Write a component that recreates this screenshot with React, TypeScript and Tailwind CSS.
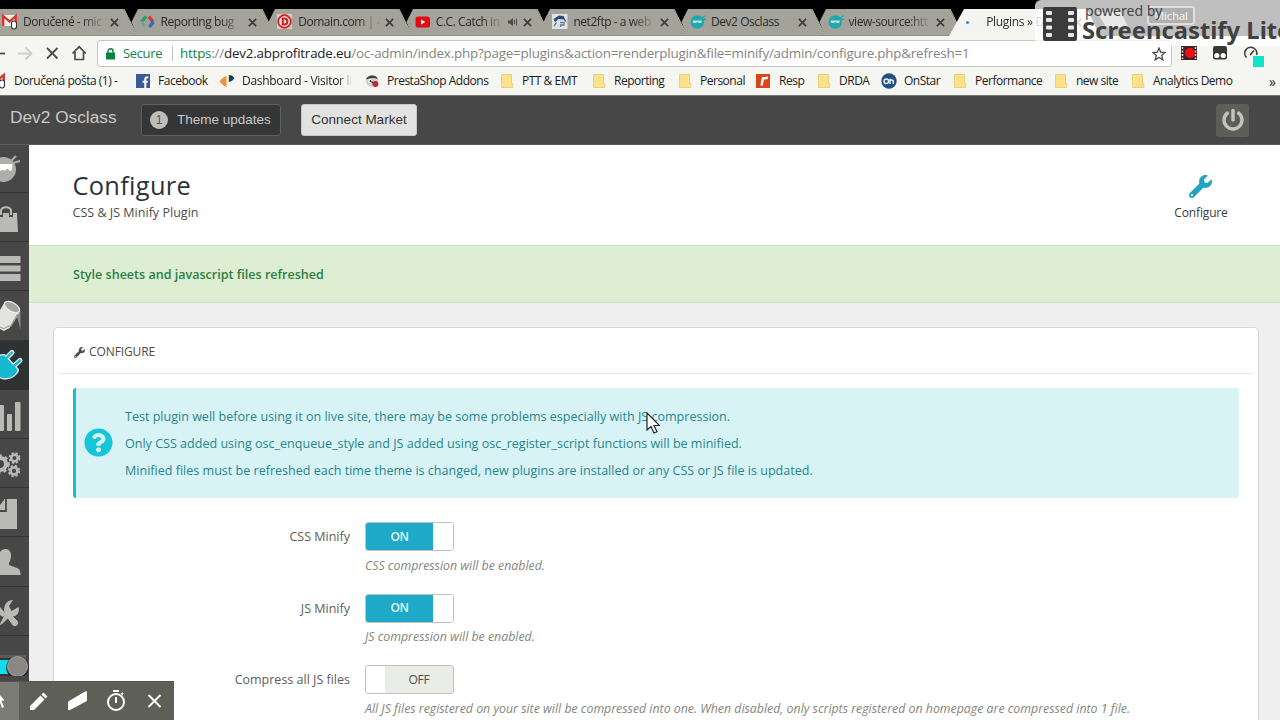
import React from "react";
import { FaWrench, FaQuestionCircle, FaPowerOff } from "react-icons/fa";

interface Tab {
  icon: string;
  title: string;
  sound?: boolean;
}
interface Bookmark {
  icon: string;
  label: string;
  width: number;
  gap: number;
}
interface Option {
  label: string;
  on: boolean;
  help: string;
}

const tabs: Tab[] = [
  { icon: "gmail", title: "Doručené - mic" },
  { icon: "code", title: "Reporting bug" },
  { icon: "domain", title: "Domain.com | 4" },
  { icon: "youtube", title: "C.C. Catch in", sound: true },
  { icon: "ftp", title: "net2ftp - a web" },
  { icon: "osclass", title: "Dev2 Osclass" },
  { icon: "osclass", title: "view-source:htt" },
];

const bookmarks: Bookmark[] = [
  { icon: "gmail", label: "Doručená pošta (1) -", width: 146, gap: 24 },
  { icon: "facebook", label: "Facebook", width: 83, gap: 22 },
  { icon: "leaf", label: "Dashboard - Visitor li", width: 146, gap: 23 },
  { icon: "presta", label: "PrestaShop Addons", width: 136, gap: 22 },
  { icon: "folder", label: "PTT & EMT", width: 92, gap: 21 },
  { icon: "folder", label: "Reporting", width: 86, gap: 21 },
  { icon: "folder", label: "Personal", width: 77, gap: 21 },
  { icon: "resp", label: "Resp", width: 62, gap: 23 },
  { icon: "folder", label: "DRDA", width: 63, gap: 21 },
  { icon: "onstar", label: "OnStar", width: 73, gap: 23 },
  { icon: "folder", label: "Performance", width: 101, gap: 21 },
  { icon: "folder", label: "new site", width: 77, gap: 21 },
  { icon: "folder", label: "Analytics Demo", width: 130, gap: 21 },
];

const options: Option[] = [
  { label: "CSS Minify", on: true, help: "CSS compression will be enabled." },
  { label: "JS Minify", on: true, help: "JS compression will be enabled." },
  {
    label: "Compress all JS files",
    on: false,
    help: "All JS files registered on your site will be compressed into one. When disabled, only scripts registered on homepage are compressed into 1 file.",
  },
];

const SiteIcon = ({ name }: { name: string }) => {
  const cls = "block h-4 w-4 shrink-0 overflow-visible";
  switch (name) {
    case "gmail":
      return (
        <svg viewBox="0 0 16 16" className={cls}>
          <rect x="0" y="1" width="15" height="11" fill="#f1efec" />
          <path d="M1.2 12V2L7.5 7.5 13.8 2v10" fill="none" stroke="#d9322b" strokeWidth="2.3" />
          <rect x="9.5" y="7" width="5" height="8" rx="2.4" fill="#fff" stroke="#333" strokeWidth="1.1" />
        </svg>
      );
    case "code":
      return (
        <svg viewBox="0 0 16 16" className={cls} fill="none" strokeWidth="3.4">
          <path d="M6 2.5L1.5 8" stroke="#1ba56b" />
          <path d="M1.3 7.5L5 13" stroke="#8a9a92" strokeWidth="2.6" />
          <path d="M9 2.5l4 5.5" stroke="#d43c36" />
          <path d="M13.5 7.8L9.5 13" stroke="#3668c4" />
        </svg>
      );
    case "domain":
      return (
        <svg viewBox="0 0 16 16" className={cls}>
          <rect width="15" height="15" fill="#dcc9c4" />
          <circle cx="7.5" cy="7.5" r="6.3" fill="#f0e4e0" stroke="#d81e22" strokeWidth="1.8" />
          <path d="M5.8 4.5h1.6a3 3 0 0 1 0 6H5.8z" fill="none" stroke="#d81e22" strokeWidth="2" />
        </svg>
      );
    case "youtube":
      return (
        <svg viewBox="0 0 16 16" className={cls}>
          <rect x="0.5" y="2.5" width="14.5" height="11" rx="2.6" fill="#e30b12" />
          <path d="M6 5.5v5l4.3-2.5z" fill="#fff" />
        </svg>
      );
    case "ftp":
      return (
        <svg viewBox="0 0 16 16" className={cls}>
          <rect width="15.5" height="15" fill="#dfe3e6" />
          <path d="M1.500 5L7 1.500l4.500.5 3.500 7-3.500-3.500-5-.5-3.500 3z" fill="#284f73" />
          <path d="M2 12l2.500-3.500M8 8.500h4v2.500H8.500V13" stroke="#5d7b96" strokeWidth="1.300" fill="none" />
        </svg>
      );
    case "osclass":
      return (
        <svg viewBox="0 0 16 16" className={cls}>
          <circle cx="7.3" cy="8" r="6.8" fill="#1fa8ad" />
          <path d="M12 4l3.5-2.5M13 5.5l3-.5" stroke="#1fa8ad" strokeWidth="1.5" />
          <path d="M2.5 6.5h9.5l-.8 2.6H8.5L7.3 8 6 9.1H3.3z" fill="#bfe0de" />
        </svg>
      );
    case "facebook":
      return (
        <svg viewBox="0 0 16 16" className={cls}>
          <rect y="1" width="14" height="14" fill="#3b5a98" />
          <path d="M9.3 15V6.2c0-1.500.7-2 3-1.800M6.500 8.700h5.200" fill="none" stroke="#fff" strokeWidth="2" />
        </svg>
      );
    case "leaf":
      return (
        <svg viewBox="0 0 16 16" className={cls}>
          <path d="M7.500 3v11C5 13 2 10.500.5 8.500 2 6 5 3.800 7.500 3z" fill="#f0913e" />
          <path d="M9.800 2c3 0 5 1.500 5.500 3.500-1.500 2-3 3-5.500 3.500z" fill="#1d4149" />
        </svg>
      );
    case "presta":
      return (
        <svg viewBox="0 0 16 16" className={cls}>
          <circle cx="7" cy="8" r="6" fill="#cfcfcb" />
          <path d="M1 6.500C2 2 11 .5 13 6 9 4.500 5 5 1 6.500z" fill="#44423f" />
          <circle cx="5" cy="8" r="1.900" fill="#fff" />
          <circle cx="5.400" cy="8" r=".9" fill="#222" />
          <path d="M6.500 8.500l4 4" stroke="#333" strokeWidth="1.500" />
          <circle cx="10.500" cy="11" r="2.900" fill="#c9203c" />
        </svg>
      );
    case "resp":
      return (
        <svg viewBox="0 0 16 16" className={cls}>
          <rect y="1" width="14" height="14" fill="#dc4316" />
          <path d="M5.500 12.500L7 5.300h1.800l3-.5" fill="none" stroke="#fff" strokeWidth="2.400" />
        </svg>
      );
    case "onstar":
      return (
        <svg viewBox="0 0 16 16" className={cls}>
          <circle cx="8" cy="8" r="7.700" fill="#23517f" />
          <circle cx="5.300" cy="8.300" r="2.300" fill="none" stroke="#e8eef5" strokeWidth="1.500" />
          <path d="M9 11V5.800M9 8c1-1.500 3.300-1.300 3.300.5V11" fill="none" stroke="#e8eef5" strokeWidth="1.500" />
        </svg>
      );
    default:
      return (
        <svg viewBox="0 0 16 16" className={cls}>
          <path d="M.5 1.500h10v9h1.300v4H.5z" fill="#fae28a" stroke="#e9c965" strokeWidth=".8" />
        </svg>
      );
  }
};

const Cross = ({ className }: { className: string }) => (
  <svg viewBox="0 0 10 10" className={className} fill="none" stroke="currentColor">
    <path d="M1 1l8 8M9 1L1 9" />
  </svg>
);

const TabStrip = () => (
  <div className="flex h-9 bg-black pt-[9px] text-[12px] tracking-[-0.45px] text-[#2b2b28]">
    {tabs.map((tab, i) => (
      <div key={i} className="relative flex h-[27px] w-[137.6px] shrink-0 items-center pb-px pl-[2px]">
        <svg viewBox="0 0 137 27" className="absolute left-0 top-0 h-[27px] w-[137px] overflow-visible">
          <path d="M0 0H123.500L137 27H-1L-6.500 13z" fill="#a3a39a" />
          <path d="M124 0L137 26.500" stroke="#c4c4bb" strokeWidth="1" />
          <path d="M-1 26.500H137" stroke="#8f8f88" strokeWidth="1" />
        </svg>
        <div className="relative flex items-center">
          <SiteIcon name={tab.icon} />
          <span
            className={
              (tab.sound ? "w-[66px] " : "w-[83px] ") +
              (tab.title === "Dev2 Osclass" ? "" : "mask-r-from-72% ") +
              "ml-[5px] whitespace-nowrap"
            }
          >
            {tab.title}
          </span>
          {tab.sound && (
            <svg viewBox="0 0 10 10" className="ml-[6px] mr-[1px] h-[10px] w-[10px]" fill="#4a4a46">
              <path d="M0 3.500h2L5 1v8L2 6.500H0z" />
              <path d="M6.500 3v4M8.500 1.500v7" stroke="#4a4a46" strokeWidth="1" />
            </svg>
          )}
          <Cross className="ml-[4px] h-[9px] w-[9px] stroke-[1.8] text-[#3c3c39]" />
        </div>
      </div>
    ))}
    <div className="relative flex h-[27px] w-[164px] shrink-0 items-center pb-px">
      <svg viewBox="0 0 164 27" className="absolute left-0 top-0 h-[27px] w-[164px] overflow-visible">
        <path d="M1 0H124L137 27H-14z" fill="#f4f4f1" />
        <path d="M134 3h24l7 15h-22z" fill="#a3a39a" />
      </svg>
      <span className="relative ml-[3px] h-[3px] w-[3px] rounded-full bg-[#3b87d8]" />
      <span className="relative ml-[17px] w-[80px] whitespace-nowrap tracking-[-0.3px] mask-r-from-55%">Plugins » Dev2</span>
      <Cross className="relative ml-[7px] h-[9px] w-[9px] stroke-[1.8] text-[#666]" />
    </div>
  </div>
);

const Toolbar = () => (
  <div className="flex h-[34px] items-center bg-[#f5f5f2] text-[#4b4b48]">
    <svg viewBox="0 0 97 34" className="h-[34px] w-[97px] shrink-0" fill="none" stroke="#4b4b48" strokeWidth="1.800">
      <path d="M0 17.500h5" />
      <path d="M18 17.500h13M25.500 11.500l6 6-6 6" stroke="#cfcfcc" />
      <path d="M47 12l10.500 10.500M57.500 12L47 22.500" />
      <path d="M72.500 17.500l6.700-6.700 6.700 6.700M75 16v7.500h8.500V16" strokeWidth="1.700" />
    </svg>
    <div className="mt-px flex h-[27px] w-[1075px] shrink-0 items-center rounded-[3px] border border-[#c6c6c2] bg-white pl-2 pr-[5px]">
      <svg viewBox="0 0 9 12" className="h-3 w-[9px]">
        <rect x="0" y="4.500" width="9" height="7" rx=".6" fill="#0b8043" />
        <path d="M2 5V3.200a2.500 2.500 0 0 1 5 0V5" fill="none" stroke="#0b8043" strokeWidth="1.400" />
      </svg>
      <span className="ml-2 w-[40px] whitespace-nowrap text-[13px] tracking-[-0.35px] text-[#15814b]">Secure</span>
      <span className="ml-[9px] mr-[7px] h-[15px] w-px bg-[#c0c0bd]" />
      <span className="whitespace-nowrap text-[13.4px] tracking-[-0.21px] text-[#858582]">
        <span className="text-[#15814b]">https</span>://<span className="text-[#222]">dev2.abprofitrade.eu</span>
        /oc-admin/index.php?page=plugins&amp;action=renderplugin&amp;file=minify/admin/configure.php&amp;refresh=1
      </span>
      <svg viewBox="0 0 14 14" className="ml-auto h-[14px] w-[14px]" fill="none" stroke="#4b4b48" strokeWidth="1.300">
        <path d="M7 1l1.700 4.200 4.400.3-3.400 2.900 1.100 4.400L7 10.400l-3.800 2.400 1.100-4.400L.9 5.500l4.400-.3z" />
      </svg>
    </div>
    <svg viewBox="0 0 16 14" className="ml-[9px] h-[14px] w-4">
      <rect width="16" height="14" fill="#3a2426" />
      <path d="M1.500 1v12M14.500 1v12" stroke="#e8d8d6" strokeWidth="1.500" strokeDasharray="2 1.500" />
      <circle cx="9" cy="7" r="5" fill="#f00d0d" />
    </svg>
    <svg viewBox="0 0 14 14" className="ml-[16px] h-[14px] w-[14px]">
      <rect width="14" height="13.500" rx="2" fill="#383838" />
      <circle cx="3.800" cy="9.500" r="2.600" fill="#fff" />
      <circle cx="10.200" cy="9.500" r="2.600" fill="#fff" />
    </svg>
    <div className="relative ml-[17px] h-[14px] w-[14px]">
      <svg viewBox="0 0 14 14" className="h-[14px] w-[14px]" fill="none" stroke="#3c3c3c" strokeWidth="1.600">
        <path d="M2.500 11.500A6 6 0 1 1 12.500 9M6 9l4-4.500" />
      </svg>
      <span className="absolute left-[9px] top-[10px] h-[11px] w-[11px] bg-[#0ee3cb]" />
    </div>
  </div>
);

const Bookmarks = () => (
  <div className="flex h-[25px] items-center overflow-hidden bg-[#f5f5f2] pb-[3px] text-[12px] tracking-[-0.49px] text-[#1c1c1c]">
    <div className="-ml-[10px] flex items-center">
      {bookmarks.map((b, i) => (
        <div key={i} className="flex shrink-0 items-center" style={{ width: b.width }}>
          <div className="shrink-0" style={{ width: b.gap }}>
            <SiteIcon name={b.icon} />
          </div>
          <span className={"whitespace-nowrap " + (b.icon === "leaf" ? "w-[110px] tracking-[-0.3px] mask-r-from-88%" : "")}>
            {b.label}
          </span>
        </div>
      ))}
    </div>
    <span className="ml-[7px] text-[14px]">»</span>
  </div>
);

const Watermark = () => (
  <div className="absolute left-[1035px] top-0 h-[46px] w-[245px] overflow-hidden rounded-tl-md bg-white/75">
    <div className="absolute left-[112px] top-[6px] h-[19px] w-[48px] rounded-[3px] border-2 border-white/60 bg-[#b0b0ae] text-center text-[11px] leading-[16px] text-white/90">
      Michal
    </div>
    <svg viewBox="0 0 34 34" className="absolute left-[8px] top-[7px] h-[34px] w-[34px]">
      <rect width="34" height="34" rx="2" fill="#3b3b3b" />
      <g fill="#e6e6e4">
        <rect x="3" y="4" width="6" height="4" rx="1" />
        <rect x="3" y="11" width="6" height="4" rx="1" />
        <rect x="3" y="18.500" width="6" height="4" rx="1" />
        <rect x="3" y="26" width="6" height="4" rx="1" />
        <rect x="25" y="4" width="6" height="4" rx="1" />
        <rect x="25" y="11" width="6" height="4" rx="1" />
        <rect x="25" y="18.500" width="6" height="4" rx="1" />
        <rect x="25" y="26" width="6" height="4" rx="1" />
      </g>
    </svg>
    <div className="absolute left-[50px] top-[2px] font-['Noto_Sans'] text-[14.1px] leading-[18px] text-[#464646]">powered by</div>
    <div className="absolute left-[47px] top-[16px] whitespace-nowrap font-['Noto_Sans'] text-[23.8px] font-bold leading-[28px] text-[#414141]">
      Screencastify Lite
    </div>
  </div>
);

const AdminHeader = () => (
  <div className="flex h-[50px] items-center border-b border-t border-b-[#5c5c5c] border-t-[#73736f] bg-[#474747] pl-[10px] font-['Liberation_Sans']">
    <span className="mt-[-4px] w-[131px] whitespace-nowrap text-[17.3px] text-[#c9c9c5]">Dev2 Osclass</span>
    <div className="flex h-8 w-[140px] items-center rounded-[3px] border border-[#5e605e] bg-[#343736] pl-2 text-[13.5px] text-[#c9c9c5]">
      <span className="mr-[9px] flex h-[18px] w-[18px] items-center justify-center rounded-full bg-[#bdbdb9] text-[12px] text-[#555]">1</span>
      Theme updates
    </div>
    <div className="ml-5 flex h-8 w-[116px] items-center justify-center rounded-[3px] border border-[#c6c6c4] bg-[#e2e2e0] text-[13.5px] text-[#333]">
      Connect Market
    </div>
    <div className="ml-auto mr-[31px] flex h-[33px] w-[33px] items-center justify-center rounded-[3px] bg-[#5d5e57] text-[#c4c4be]">
      <FaPowerOff size={22} />
    </div>
  </div>
);

const sideIcons: React.ReactNode[] = [
  <g key="0">
    <circle cx="3.500" cy="24.500" r="12.500" fill="#adadab" />
    <path d="M11 16l5-5M13 18l7-2" stroke="#adadab" strokeWidth="2.200" />
    <path d="M0 19h12.500l-.5 6-2 1-3-2.500-2 2-3-.5-2 1z" fill="#fff" />
  </g>,
  <g key="1">
    <path d="M0 20h17l1 19H0z" />
    <path d="M1 24v-6c0-6 10-6 10 0v6" fill="none" stroke="#474747" strokeWidth="4" />
    <path d="M1 22v-4c0-5 10-5 10 0v4" fill="none" stroke="#b9b9b6" strokeWidth="2" />
  </g>,
  <path key="2" d="M0 14h20.500v7H0zM0 23.500h20.500v6H0zM0 32h20.500v7H0z" />,
  <g key="3">
    <path d="M17 19l3.500 1v19l-2-8-2-6z" fill="#8a8a88" />
    <path d="M0 19L4.500 11.500 19 22 9.500 37 4 40 0 38z" fill="#e3e3df" />
    <path d="M10 35L17 23l2 0-8 13z" fill="#9c9c99" />
    <path d="M0 36l4 1.500 6-3" fill="none" stroke="#a5a5a2" strokeWidth="1.200" />
    <ellipse cx="12" cy="16" rx="8.500" ry="4.300" transform="rotate(30 12 16)" fill="#a3a3a0" stroke="#ececea" strokeWidth="1.300" />
  </g>,
  <g key="4" strokeLinecap="round" strokeLinejoin="round">
    <g stroke="#e9fcfd" fill="#e9fcfd">
      <path d="M7 16.500L12 11.500M14.500 24.500L20 19.500" strokeWidth="5" />
      <path d="M-4 16l8-1 13 14-1 2c-4 6-11 6-14 5l-6-3z" strokeWidth="4" />
    </g>
    <g stroke="#15b8cf" fill="#15b8cf">
      <path d="M7 16.500L12 11.500M14.500 24.500L20 19.500" strokeWidth="2.400" />
      <path d="M-4 16l8-1 13 14-1 2c-4 6-11 6-14 5l-6-3z" strokeWidth="1.400" />
    </g>
  </g>,
  <path key="5" d="M0 15h3q1 0 1 1v24q0 1-1 1H0zM7 25q0-1 1-1h3q1 0 1 1v15q0 1-1 1H8q-1 0-1-1zM15 13q0-1 1-1h3.500q1 0 1 1v27q0 1-1 1H16q-1 0-1-1z" />,
  <g key="6" fill="none" stroke="#b9b9b6">
    <circle cx="0" cy="25" r="6" strokeWidth="4" />
    <circle cx="0" cy="25" r="8.500" strokeWidth="2.500" strokeDasharray="3.200 3.200" />
    <circle cx="14.500" cy="19" r="3.300" strokeWidth="2.500" />
    <circle cx="14.500" cy="19" r="5" strokeWidth="1.800" strokeDasharray="2.200 1.800" />
    <circle cx="14" cy="32" r="3.500" strokeWidth="2.700" />
    <circle cx="14" cy="32" r="5.300" strokeWidth="1.800" strokeDasharray="2.300 1.900" />
  </g>,
  <g key="7">
    <path d="M0 11h17v30H0z" />
    <path d="M0 23h6V11" fill="none" stroke="#474747" strokeWidth="1.800" />
    <path d="M0 17l4-5v-1H0z" fill="#474747" />
  </g>,
  <path key="8" d="M0 15c3-5 11-4 11 3 0 4-1 6-2 8v2l8 3c3 1 3.500 4 3.500 7H0z" />,
  <g key="9">
    <path d="M0 37l5-10c-3-8 2-14 8-14l-4 6 2.500 5 7-4c2 6-3 11-8 9L2 37l-2 1z" />
    <path d="M8 31l3-3 6 6c2 3-1 6-4 4z" strokeWidth="1" stroke="#b9b9b6" />
    <path d="M0 20l6 7-3 3-3-2z" />
  </g>,
];

const Sidebar = () => (
  <div className="w-[29px] shrink-0 bg-[#474747]">
    {sideIcons.map((icon, i) => (
      <div
        key={i}
        className={
          (i === 0 ? "h-[48px] " : "h-[49.2px] ") +
          (i === 4 ? "bg-[#2f3233] " : "") +
          "overflow-hidden border-b border-[#343432]"
        }
      >
        <svg viewBox="0 0 29 49" className="block h-[49px] w-[29px]" fill="#b9b9b6">
          {icon}
        </svg>
      </div>
    ))}
    <svg viewBox="0 0 29 40" className="block h-10 w-[29px]">
      <rect x="-2" y="19" width="28" height="24" fill="#5b5b57" />
      <rect x="-2" y="22" width="24" height="18" fill="#333" />
      <rect x="0" y="24" width="10" height="14" fill="#12dcea" />
      <circle cx="17.500" cy="31.500" r="11.300" fill="#272727" />
      <circle cx="17.500" cy="30.500" r="10" fill="#8a8883" stroke="#a9a7a2" />
    </svg>
  </div>
);

const Switch = ({ on }: { on: boolean }) => (
  <div
    className={
      "flex h-[29px] w-[89px] overflow-hidden rounded-[3px] border border-[#bfc1bf] text-[12px] tracking-[-0.3px] " +
      (on ? "" : "flex-row-reverse")
    }
  >
    {on ? (
      <span className="flex w-[67px] items-center justify-center bg-[#1ea9c8] font-semibold text-[#e5f8fb]">ON</span>
    ) : (
      <span className="flex w-[68px] items-center justify-center bg-[#eaece8] text-[#4c4c49]">OFF</span>
    )}
    <span className="flex-1 bg-white" />
  </div>
);

const RecorderBar = () => (
  <div className="absolute bottom-0 left-0 flex h-[39px] w-[174px] border-t border-[#55554f] bg-[#5e5f57]">
    <svg viewBox="0 0 174 38" className="h-[38px] w-[174px]" fill="#fff">
      <rect width="19" height="38" fill="#7b7c75" />
      <path d="M0 13l4.500 5.500-3 .2L4 25l-2 1-2-5z" />
      <path d="M30 24l10.500-10.500 4 4L34 28h-4zM41.500 12.500l2-2 4 4-2 2z" />
      <path d="M68 20.500q0-1 1-1.500l16-9.500q2-1 2 1V18q0 1-1 1.500L70 28q-2 1-2-1z" />
      <g fill="none" stroke="#fff" strokeWidth="2">
        <circle cx="116" cy="20" r="8" />
        <path d="M113 9h6M116 15v6M121.500 12.500l1.500-1.500" />
        <path d="M148.500 13l12 12M160.500 13l-12 12" />
      </g>
    </svg>
  </div>
);

const App: React.FC = () => {
  return (
    <div className="relative flex h-[720px] w-[1280px] flex-col overflow-hidden bg-[#eeefee] font-['Open_Sans',sans-serif]">
      <TabStrip />
      <Toolbar />
      <Bookmarks />
      <AdminHeader />
      <div className="flex min-h-0 flex-1">
        <Sidebar />
        <div className="min-w-0 flex-1">
          <div className="flex h-[100px] justify-between bg-white pl-[43.500px] pr-[53px]">
            <div className="pt-[24px]">
              <h1 className="text-[25.400px] font-medium leading-[32px] tracking-[0.3px] text-[#2b3438]">Configure</h1>
              <p className="mt-[3px] text-[12.560px] leading-[18px] text-[#4d4d4b]">CSS &amp; JS Minify Plugin</p>
            </div>
            <div className="flex w-[54px] flex-col items-center pt-[30px] text-[12px] leading-[18px] tracking-[-0.15px] text-[#3c3c3c]">
              <FaWrench size={23} color="#1fa6c4" />
              <span className="ml-[2px] mt-[6px]">Configure</span>
            </div>
          </div>
          <div className="flex h-[58px] items-center border-b border-t border-[#cbe3c0] bg-[#ddeed2] pl-[44px] pt-[2px] text-[12.550px] font-semibold text-[#2c7f42]">
            Style sheets and javascript files refreshed
          </div>
          <div className="ml-6 mr-[21px] mt-6 h-[500px] rounded-[5px] border border-[#d5d7d8] bg-white px-[5px]">
            <div className="flex h-[46px] items-center gap-[4px] border-b border-[#e8e9ea] pl-[15px] pt-[3px] text-[12px] tracking-[-0.1px] text-[#4c4c4c]">
              <FaWrench size={11} />
              <span>CONFIGURE</span>
            </div>
            <div className="mx-[14px] mt-[14px] flex h-[110px] items-center rounded-[3px] border-l-[3px] border-[#1bbccb] bg-[#d8f3f6] pl-[8px] text-[12.560px] leading-[27px] text-[#26868d]">
              <FaQuestionCircle size={29} color="#14c6d8" className="mb-px shrink-0" />
              <div className="ml-[12px] whitespace-nowrap">
                <p>Test plugin well before using it on live site, there may be some problems especially with JS compression.</p>
                <p>Only CSS added using osc_enqueue_style and JS added using osc_register_script functions will be minified.</p>
                <p>Minified files must be refreshed each time theme is changed, new plugins are installed or any CSS or JS file is updated.</p>
              </div>
            </div>
            <div className="mt-6">
              {options.map((o) => (
                <div key={o.label} className="flex h-[71.5px]">
                  <div className="w-[291px] pt-[6px] text-right text-[12.500px] leading-[18px] text-[#5d5d5b]">{o.label}</div>
                  <div className="ml-[15px]">
                    <Switch on={o.on} />
                    <p className="mt-[5.500px] whitespace-nowrap text-[12.340px] italic leading-[18px] text-[#858580]">{o.help}</p>
                  </div>
                </div>
              ))}
            </div>
          </div>
        </div>
      </div>
      <Watermark />
      <RecorderBar />
      <svg viewBox="0 0 14 22" className="absolute left-[646px] top-[412px] h-[22px] w-[14px]">
        <path d="M1 1v17l4-3.500 3 6.500 3-1.300-3-6.200h5.500z" fill="#fff" stroke="#222" strokeWidth="1.200" />
      </svg>
    </div>
  );
};

export default App;
